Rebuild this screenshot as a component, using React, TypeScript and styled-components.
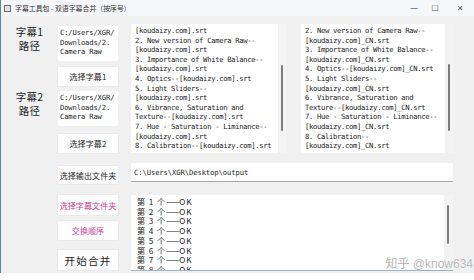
import React from 'react';
import styled, { createGlobalStyle } from 'styled-components';

const GlobalStyle = createGlobalStyle`
    html, body {
        margin: 0;
        padding: 0;
        background: #ffffff;
        width: 474px;
        height: 280px;
        overflow: hidden;
    }
`;

const CJK = `"Noto Sans CJK SC", "Noto Sans", sans-serif`;
const MONO = `"DejaVu Sans Mono", "Liberation Mono", monospace`;

const Window = styled.div`
    width: 474px;
    height: 273px;
    background: #f0f0f0;
    display: flex;
    flex-direction: column;
    position: relative;
    overflow: hidden;
    border-left: 1px solid #5d8a96;
    box-sizing: border-box;
    font-family: ${CJK};
    color: #1c1c1c;
`;

const TitleBar = styled.div`
    height: 16px;
    background: #f5f6f8;
    display: flex;
    align-items: center;
    padding-left: 3px;
    font-size: 6.9px;
    color: #333;
`;

const AppIcon = styled.div`
    width: 5px;
    height: 5px;
    border: 1px solid #6a6a6a;
    background: #dfe6ea;
    margin-right: 4px;
`;

const TitleText = styled.span`
    flex: 1;
    white-space: nowrap;
`;

const WinButton = styled.span<{ $w: number }>`
    width: ${p => p.$w}px;
    text-align: center;
    font-family: "DejaVu Sans", sans-serif;
    font-size: 8px;
    color: #555;
`;

const Body = styled.div`
    flex: 1;
    display: flex;
    flex-direction: column;
    padding-top: 8px;
`;

const TopSection = styled.div`
    display: flex;
    height: 129px;
`;

const LeftPanel = styled.div`
    width: 117px;
    display: flex;
    flex-direction: column;
    padding-top: 2px;
`;

const PathGroup = styled.div<{ $top: number }>`
    display: flex;
    margin-top: ${p => p.$top}px;
`;

const Label = styled.div`
    width: 57px;
    text-align: center;
    font-size: 10.5px;
    line-height: 14px;
    margin-top: -1px;
    letter-spacing: 0.2px;
`;

const PathBox = styled.div`
    width: 60px;
    height: 35px;
    background: #ffffff;
    box-sizing: border-box;
    padding: 2px 0 0 2px;
    font-family: ${MONO};
    font-size: 7.2px;
    letter-spacing: -0.15px;
    line-height: 9.6px;
    white-space: pre;
    overflow: hidden;
    color: #222;
`;

const Button = styled.div<{ $pink?: boolean; $big?: boolean; $h?: number; $top?: number }>`
    width: 60px;
    height: ${p => p.$h ?? 19}px;
    margin-top: ${p => p.$top ?? 0}px;
    background: #fdfdfd;
    box-shadow: 0 0 0 0.5px #e4e4e4;
    display: flex;
    align-items: center;
    justify-content: center;
    font-size: ${p => (p.$big ? 10.5 : 8)}px;
    letter-spacing: ${p => (p.$big ? 1.2 : 0.1)}px;
    color: ${p => (p.$pink ? '#c93c98' : '#1e1e1e')};
    white-space: nowrap;
    flex-shrink: 0;
`;

const LeftButton = styled(Button)`
    margin-left: 57px;
`;

const Lists = styled.div`
    display: flex;
    margin-left: 13px;
    gap: 14px;
`;

const ListBox = styled.div<{ $w: number }>`
    width: ${p => p.$w}px;
    display: flex;
    background: #ffffff;
`;

const ListText = styled.div`
    flex: 1;
    padding: 2px 0 0 4px;
    font-family: ${MONO};
    font-size: 7.2px;
    letter-spacing: -0.32px;
    line-height: 9.6px;
    white-space: pre;
    overflow: hidden;
    color: #222;
`;

const ScrollTrack = styled.div<{ $top: number; $len: number }>`
    width: 9px;
    background: #f3f3f3;
    position: relative;
    &::after {
        content: '';
        position: absolute;
        left: 3px;
        top: ${p => p.$top}px;
        width: 2px;
        height: ${p => p.$len}px;
        background: #7c7c7c;
        border-radius: 1px;
    }
`;

const Row = styled.div<{ $top: number }>`
    display: flex;
    margin-top: ${p => p.$top}px;
    padding-left: 57px;
`;

const OutputField = styled.div`
    width: 322px;
    height: 19px;
    margin-left: 13px;
    box-sizing: border-box;
    background: #ffffff;
    border-bottom: 1px solid #a8a8a8;
    padding-left: 3px;
    display: flex;
    align-items: center;
    font-family: ${MONO};
    font-size: 7.2px;
    letter-spacing: -0.1px;
    color: #222;
`;

const ButtonColumn = styled.div`
    display: flex;
    flex-direction: column;
`;

const LogBox = styled.div`
    width: 322px;
    height: 76px;
    margin-left: 13px;
    box-sizing: border-box;
    background: #ffffff;
    border-bottom: 1px solid #9fb4c2;
    display: flex;
`;

const LogText = styled.div`
    flex: 1;
    padding: 2px 0 0 6px;
    font-family: ${CJK};
    font-size: 8.2px;
    letter-spacing: 0.9px;
    line-height: 9.7px;
    white-space: pre;
    overflow: hidden;
    color: #222;
`;

const Dash = styled.span`
    letter-spacing: -0.6px;
`;

const Watermark = styled.div`
    position: absolute;
    right: 1px;
    bottom: 2px;
    font-family: "Liberation Sans", ${CJK};
    font-size: 12px;
    color: #b8b8b8;
    text-shadow: 0 0 1px #ffffff;
`;

const list1 = [
    '[koudaizy.com].srt',
    '2. New version of Camera Raw--',
    '[koudaizy.com].srt',
    '3. Importance of White Balance--',
    '[koudaizy.com].srt',
    '4. Optics--[koudaizy.com].srt',
    '5. Light Sliders--',
    '[koudaizy.com].srt',
    '6. Vibrance, Saturation and',
    'Texture--[koudaizy.com].srt',
    '7. Hue - Saturation - Liminance--',
    '[koudaizy.com].srt',
    '8. Calibration--[koudaizy.com].srt',
];

const list2 = [
    '2. New version of Camera Raw--',
    '[koudaizy.com]_CN.srt',
    '3. Importance of White Balance--',
    '[koudaizy.com]_CN.srt',
    '4. Optics--[koudaizy.com]_CN.srt',
    '5. Light Sliders--',
    '[koudaizy.com]_CN.srt',
    '6. Vibrance, Saturation and',
    'Texture--[koudaizy.com]_CN.srt',
    '7. Hue - Saturation - Liminance--',
    '[koudaizy.com]_CN.srt',
    '8. Calibration--',
    '[koudaizy.com]_CN.srt',
];

const logNumbers = [1, 2, 3, 4, 5, 6, 7, 8];

const App = () => {
    return (
        <>
            <GlobalStyle />
            <Window>
                <TitleBar>
                    <AppIcon />
                    <TitleText>字幕工具包 - 双语字幕合并（按序号）</TitleText>
                    <WinButton $w={20}>—</WinButton>
                    <WinButton $w={22}>☐</WinButton>
                    <WinButton $w={28}>✕</WinButton>
                </TitleBar>
                <Body>
                    <TopSection>
                        <LeftPanel>
                            <PathGroup $top={0}>
                                <Label>字幕1<br />路径</Label>
                                <PathBox>{'C:/Users/XGR/\nDownloads/2.\nCamera Raw'}</PathBox>
                            </PathGroup>
                            <LeftButton $top={6}>选择字幕1</LeftButton>
                            <PathGroup $top={5}>
                                <Label>字幕2<br />路径</Label>
                                <PathBox>{'C:/Users/XGR/\nDownloads/2.\nCamera Raw'}</PathBox>
                            </PathGroup>
                            <LeftButton $top={8}>选择字幕2</LeftButton>
                        </LeftPanel>
                        <Lists>
                            <ListBox $w={156}>
                                <ListText>{list1.join('\n')}</ListText>
                                <ScrollTrack $top={41} $len={66} />
                            </ListBox>
                            <ListBox $w={153}>
                                <ListText>{list2.join('\n')}</ListText>
                                <ScrollTrack $top={40} $len={67} />
                            </ListBox>
                        </Lists>
                    </TopSection>
                    <Row $top={10}>
                        <Button $top={3} $h={18}>选择输出文件夹</Button>
                        <OutputField>C:\Users\XGR\Desktop\output</OutputField>
                    </Row>
                    <Row $top={11}>
                        <ButtonColumn>
                            <Button $pink $h={20}>选择字幕文件夹</Button>
                            <Button $pink $top={6}>交换顺序</Button>
                            <Button $big $h={20} $top={10}>开始合并</Button>
                        </ButtonColumn>
                        <LogBox>
                            <LogText>
                                {logNumbers.map(n => (
                                    <div key={n}>
                                        第 {n} 个<Dash>——</Dash>OK
                                    </div>
                                ))}
                            </LogText>
                            <ScrollTrack $top={10} $len={39} />
                        </LogBox>
                    </Row>
                </Body>
                <Watermark>知乎 @know634</Watermark>
            </Window>
        </>
    );
};

export default App;
